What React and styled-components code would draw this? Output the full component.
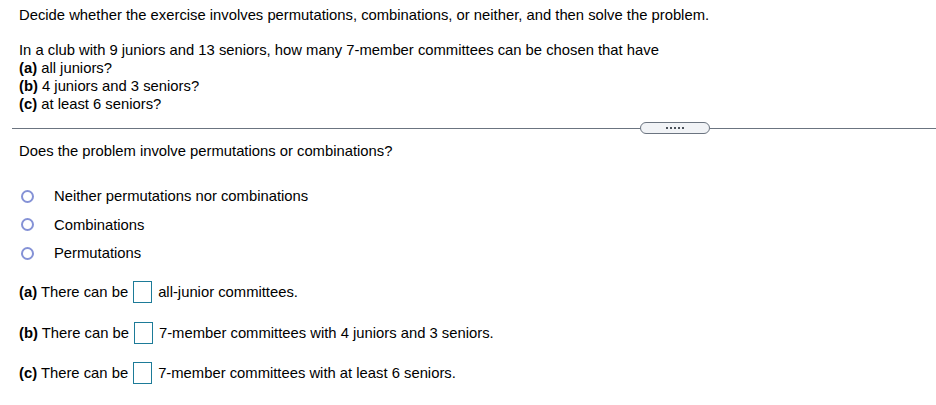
import React from "react";
import styled, { createGlobalStyle } from "styled-components";

const Global = createGlobalStyle`
  body {
    margin: 0;
    background: #fff;
    font-family: "Liberation Sans", Arial, sans-serif;
    font-size: 14.8px;
    color: #000;
  }
`;

const Page = styled.div`
  width: 936px;
  height: 405px;
  padding-top: 6px;
  box-sizing: border-box;
  overflow: hidden;
`;

const Text = styled.div`
  padding-left: 19px;
  line-height: 18px;
  margin-bottom: ${(p) => p.gap || 0}px;
`;

const Divider = styled.div`
  display: flex;
  align-items: center;
  margin: 9px 0 8px 12px;
  height: 12px;
`;

const Line = styled.div`
  height: 1px;
  background: #6b7480;
  flex: ${(p) => (p.grow ? 1 : "0 0 " + p.w + "px")};
`;

const Pill = styled.div`
  width: 70px;
  height: 12px;
  box-sizing: border-box;
  border: 1px solid #6b7480;
  border-radius: 6px;
  background: #f1f3f6;
  display: flex;
  align-items: center;
  justify-content: center;
  gap: 2px;
`;

const Dot = styled.span`
  width: 2px;
  height: 2px;
  background: #4b525a;
`;

const Options = styled.div`
  margin-top: 27px;
  display: flex;
  flex-direction: column;
  gap: 10.5px;
`;

const Option = styled.label`
  display: flex;
  align-items: center;
  height: 18px;
  line-height: 18px;
  padding-left: 21px;
`;

const Radio = styled.span`
  width: 13px;
  height: 13px;
  box-sizing: border-box;
  border: 2px solid #8592d6;
  border-radius: 50%;
  margin-right: 20px;
`;

const Answers = styled.div`
  margin-top: 19px;
  display: flex;
  flex-direction: column;
  gap: 18.5px;
`;

const Answer = styled.div`
  display: flex;
  align-items: center;
  height: 22px;
  padding-left: 19px;
  white-space: pre;
`;

const Box = styled.span`
  width: 19px;
  height: 22px;
  box-sizing: border-box;
  border: 1px solid #1d7b98;
  margin: 0 6px 0 5px;
`;

const answers = [
  ["(a)", "all-junior committees."],
  ["(b)", "7-member committees with 4 juniors and 3 seniors."],
  ["(c)", "7-member committees with at least 6 seniors."],
];

export default function App() {
  return (
    <Page>
      <Global />
      <Text gap={17}>
        Decide whether the exercise involves permutations, combinations, or
        neither, and then solve the problem.
      </Text>
      <Text>
        In a club with 9 juniors and 13 seniors, how many 7-member committees
        can be chosen that have
        <br />
        <b>(a)</b> all juniors?
        <br />
        <b>(b)</b> 4 juniors and 3 seniors?
        <br />
        <b>(c)</b> at least 6 seniors?
      </Text>
      <Divider>
        <Line w={628} />
        <Pill>
          {[0, 1, 2, 3, 4].map((i) => (
            <Dot key={i} />
          ))}
        </Pill>
        <Line grow />
      </Divider>
      <Text>Does the problem involve permutations or combinations?</Text>
      <Options>
        {[
          "Neither permutations nor combinations",
          "Combinations",
          "Permutations",
        ].map((o) => (
          <Option key={o}>
            <Radio />
            {o}
          </Option>
        ))}
      </Options>
      <Answers>
        {answers.map(([k, t]) => (
          <Answer key={k}>
            <b>{k}</b> There can be
            <Box />
            {t}
          </Answer>
        ))}
      </Answers>
    </Page>
  );
}
